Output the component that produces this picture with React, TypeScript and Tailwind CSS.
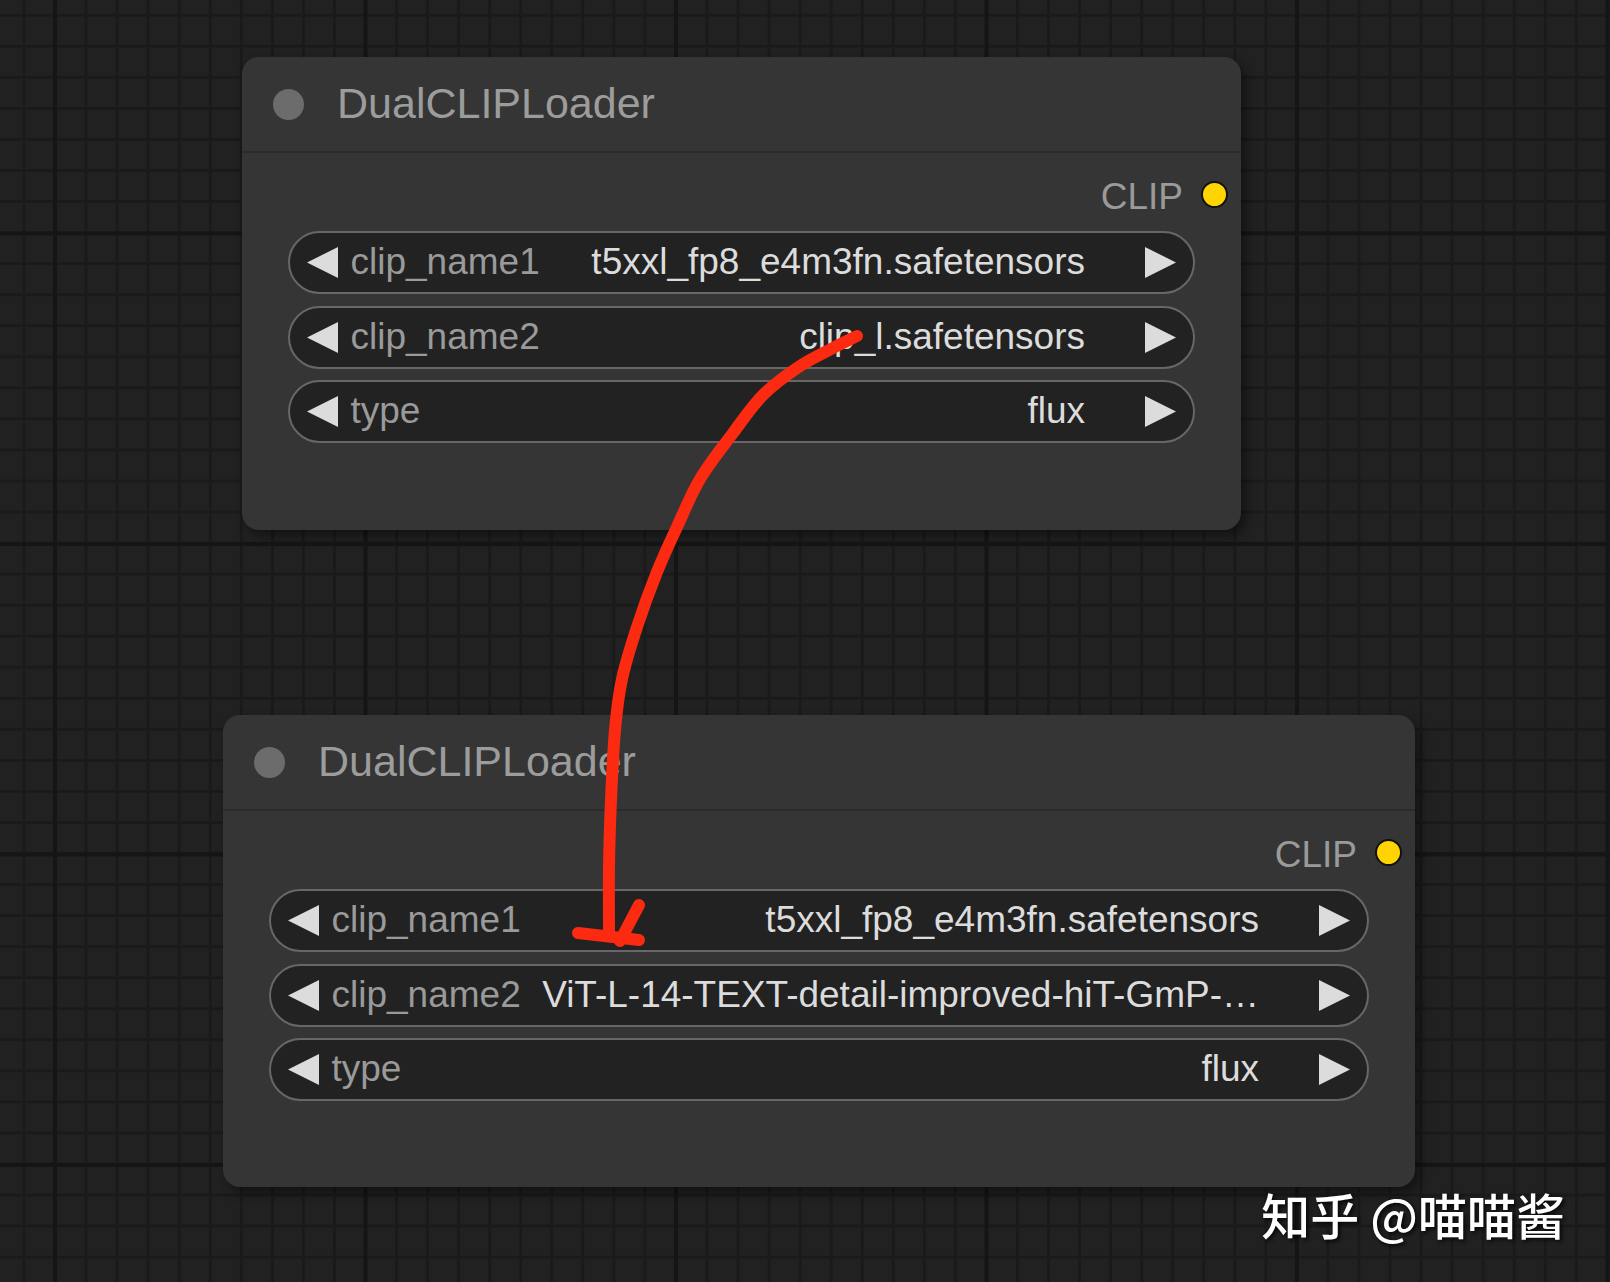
import React from "react";

type Pt = [number, number];

function smoothPath(pts: Pt[]): string {
  let d = `M${pts[0][0]},${pts[0][1]}`;
  for (let i = 0; i < pts.length - 1; i++) {
    const p0 = pts[i - 1] || pts[i];
    const p1 = pts[i];
    const p2 = pts[i + 1];
    const p3 = pts[i + 2] || p2;
    const c1x = p1[0] + (p2[0] - p0[0]) / 6;
    const c1y = p1[1] + (p2[1] - p0[1]) / 6;
    const c2x = p2[0] - (p3[0] - p1[0]) / 6;
    const c2y = p2[1] - (p3[1] - p1[1]) / 6;
    d += ` C${c1x.toFixed(1)},${c1y.toFixed(1)} ${c2x.toFixed(1)},${c2y.toFixed(1)} ${p2[0]},${p2[1]}`;
  }
  return d;
}

const arrowPts: Pt[] = [
  [857, 336],
  [833, 348],
  [800, 366],
  [763, 395],
  [733, 433],
  [700, 479],
  [677, 527],
  [657, 572],
  [637, 627],
  [622, 679],
  [615, 730],
  [611, 800],
  [609, 867],
  [609, 932],
];

function LeftTri() {
  return (
    <svg width="31" height="31" viewBox="0 0 31 31" className="shrink-0">
      <polygon points="0,15.5 31,0 31,31" fill="#dcdcdc" />
    </svg>
  );
}

function RightTri() {
  return (
    <svg width="31" height="31" viewBox="0 0 31 31" className="shrink-0">
      <polygon points="0,0 31,15.5 0,31" fill="#dcdcdc" />
    </svg>
  );
}

type Row = { label: string; value: string };

function Widget({ label, value }: Row) {
  return (
    <div className="h-[63px] rounded-full border-2 border-[#676767] bg-[#222222] flex items-center pl-[16.5px] pr-[17px]">
      <LeftTri />
      <span className="ml-[13px] text-[37px] leading-[1.2] text-[#9a9a9a] whitespace-nowrap shrink-0">
        {label}
      </span>
      <span className="flex-1 min-w-0 ml-[18px] text-right text-[37px] leading-[1.2] text-[#dcdcdc] whitespace-nowrap">
        {value}
      </span>
      <span className="w-[60px] shrink-0" />
      <RightTri />
    </div>
  );
}

function NodeCard({ pos, rows }: { pos: string; rows: Row[] }) {
  return (
    <div
      className={`absolute ${pos} rounded-[17px] bg-[#353535] shadow-[5px_6px_12px_rgba(0,0,0,0.45)] flex flex-col`}
    >
      <div className="h-[96px] shrink-0 flex items-center border-b-2 border-[#2b2b2b]">
        <div className="ml-[31px] w-[31px] h-[31px] rounded-full bg-[#6c6c6c] shrink-0" />
        <span className="ml-[33px] text-[43px] leading-[1.2] text-[#9c9c9c] whitespace-nowrap">
          DualCLIPLoader
        </span>
      </div>
      <div className="mt-[16px] h-[50px] flex items-center justify-end pr-[13px] gap-[18px]">
        <span className="mt-[6px] text-[37px] leading-[1.2] text-[#9a9a9a]">CLIP</span>
        <div className="w-[27px] h-[27px] rounded-full bg-[#ffd400] border-[2.5px] border-[#111111]" />
      </div>
      <div className="mt-[12px] px-[46px] flex flex-col gap-[11.5px]">
        {rows.map((r) => (
          <Widget key={r.label} label={r.label} value={r.value} />
        ))}
      </div>
    </div>
  );
}

export default function App() {
  const d = smoothPath(arrowPts);
  return (
    <div className="relative w-[1610px] h-[1282px] overflow-hidden font-['Liberation_Sans',Arial,sans-serif] [background-color:#212121] [background-image:linear-gradient(to_right,#151515_0,#151515_4px,transparent_4px),linear-gradient(to_bottom,#151515_0,#151515_4px,transparent_4px),linear-gradient(to_right,#1a1a1a_0,#1a1a1a_3px,transparent_3px),linear-gradient(to_bottom,#1a1a1a_0,#1a1a1a_3px,transparent_3px)] [background-size:310.5px_100%,100%_310.5px,31.05px_100%,100%_31.05px] [background-position:53px_0,0_542px,22.5px_0,0_13.8px]">
      <NodeCard
        pos="left-[242px] top-[57px] w-[999px] h-[473px]"
        rows={[
          { label: "clip_name1", value: "t5xxl_fp8_e4m3fn.safetensors" },
          { label: "clip_name2", value: "clip_l.safetensors" },
          { label: "type", value: "flux" },
        ]}
      />
      <NodeCard
        pos="left-[223px] top-[715px] w-[1192px] h-[472px]"
        rows={[
          { label: "clip_name1", value: "t5xxl_fp8_e4m3fn.safetensors" },
          { label: "clip_name2", value: "ViT-L-14-TEXT-detail-improved-hiT-GmP-…" },
          { label: "type", value: "flux" },
        ]}
      />

      <svg
        className="absolute left-0 top-0 pointer-events-none"
        width="1610"
        height="1282"
        viewBox="0 0 1610 1282"
      >
        <g fill="none" stroke="#fb2a10" strokeWidth="12" strokeLinecap="round" strokeLinejoin="round">
          <path d={d} />
          <path d="M578,933 L639,940" />
          <path d="M639,905 L620,941" />
        </g>
      </svg>

      <div className="absolute right-[45px] top-[1185px] text-[49px] leading-[1.2] font-medium text-white whitespace-nowrap font-['Noto_Sans_CJK_SC','Noto_Sans',sans-serif] [text-shadow:2px_2px_4px_rgba(0,0,0,0.85)]">
        知乎 @喵喵酱
      </div>
    </div>
  );
}
